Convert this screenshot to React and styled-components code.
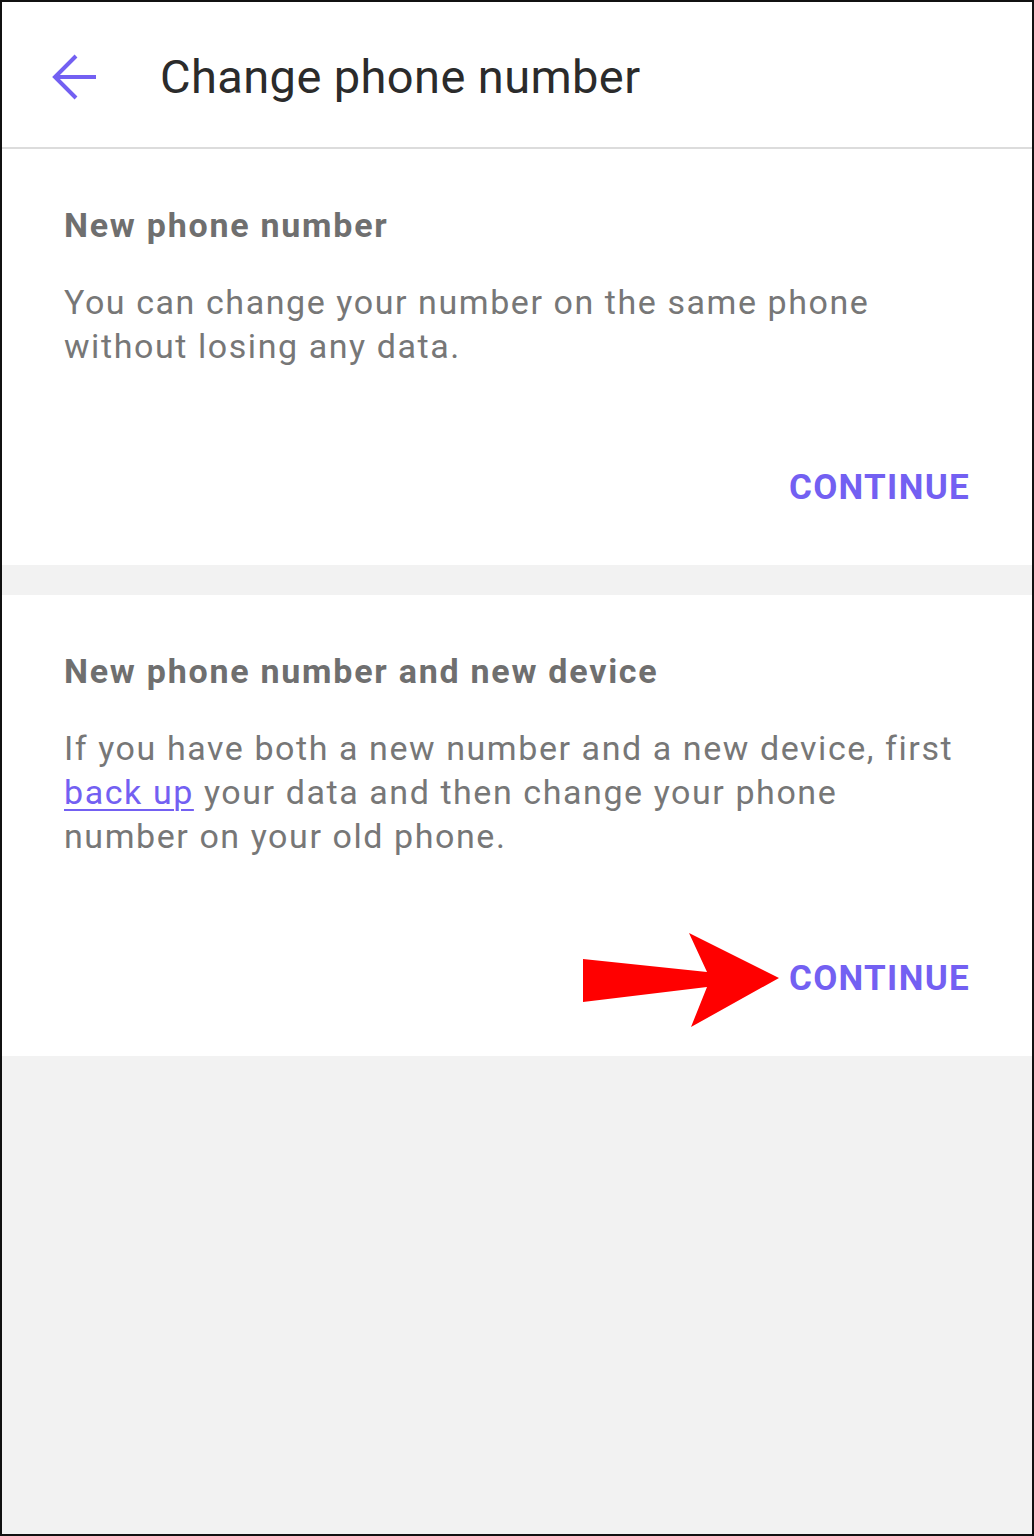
import styled, { createGlobalStyle } from "styled-components";

const GlobalStyle = createGlobalStyle`
  html, body {
    margin: 0;
    padding: 0;
    background: #f2f2f2;
  }
  * {
    box-sizing: border-box;
  }
`;

const Screen = styled.div`
  min-height: 100vh;
  display: flex;
  flex-direction: column;
  background: #f2f2f2;
  border: 2px solid #111;
  font-family: Roboto, "Liberation Sans", sans-serif;
`;

const Header = styled.header`
  height: 147px;
  display: flex;
  align-items: center;
  background: #fff;
  border-bottom: 2px solid #dcdcdc;
  padding: 4px 0 0 50px;
`;

const BackButton = styled.button`
  width: 48px;
  height: 48px;
  padding: 0;
  border: none;
  background: none;
  display: flex;
  align-items: center;
  justify-content: center;
  margin-right: 60px;
  cursor: pointer;
`;

const Title = styled.h1`
  margin: 0;
  font-size: 47px;
  font-weight: 400;
  color: #2b2b2b;
  letter-spacing: 0.4px;
`;

const Card = styled.section`
  background: #fff;
  padding: 54px 62px 55px 62px;
  display: flex;
  flex-direction: column;
  & + & {
    margin-top: 30px;
  }
`;

const CardTitle = styled.h2`
  margin: 0;
  font-size: 34px;
  line-height: 44px;
  font-weight: 700;
  color: #6f6f6f;
  letter-spacing: 1.75px;
`;

const CardText = styled.p`
  margin: 33px 0 0;
  font-size: 34px;
  line-height: 44px;
  color: #777;
  letter-spacing: 1.57px;
`;

const Link = styled.a`
  color: #7360f2;
  text-decoration: underline;
  text-decoration-thickness: 2px;
  text-underline-offset: 5px;
`;

const Actions = styled.div`
  display: flex;
  justify-content: flex-end;
  align-items: center;
  margin-top: ${(p) => p.$gap}px;
`;

const ContinueButton = styled.button`
  position: relative;
  border: none;
  background: none;
  padding: 0;
  font-family: inherit;
  font-size: 35px;
  line-height: 44px;
  font-weight: 700;
  color: #7360f2;
  letter-spacing: 1.3px;
  cursor: pointer;
`;

const Pointer = styled.svg`
  position: absolute;
  right: 100%;
  top: 50%;
  margin-top: -46px;
  margin-right: 6px;
  width: 200px;
  height: 96px;
  pointer-events: none;
`;

const BackArrow = () => (
  <svg width="48" height="48" viewBox="0 0 48 48">
    <path
      d="M44 24H5M24 3L3 24l21 21"
      fill="none"
      stroke="#7360f2"
      strokeWidth="4"
      strokeLinejoin="miter"
    />
  </svg>
);

const RedArrow = () => (
  <Pointer viewBox="0 0 200 96">
    <polygon points="0,26 124,39 106,0 196,45 108,94 124,54 0,69" fill="#ff0000" />
  </Pointer>
);

export default function App() {
  return (
    <>
      <GlobalStyle />
      <Screen>
        <Header>
          <BackButton aria-label="Back">
            <BackArrow />
          </BackButton>
          <Title>Change phone number</Title>
        </Header>

        <Card>
          <CardTitle>New phone number</CardTitle>
          <CardText>
            You can change your number on the same phone without losing any
            data.
          </CardText>
          <Actions $gap={98}>
            <ContinueButton>CONTINUE</ContinueButton>
          </Actions>
        </Card>

        <Card>
          <CardTitle>New phone number and new device</CardTitle>
          <CardText>
            If you have both a new number and a new device, first{" "}
            <Link href="#">back up</Link> your data and then change your phone
            number on your old phone.
          </CardText>
          <Actions $gap={99}>
            <ContinueButton>
              <RedArrow />
              CONTINUE
            </ContinueButton>
          </Actions>
        </Card>
      </Screen>
    </>
  );
}
